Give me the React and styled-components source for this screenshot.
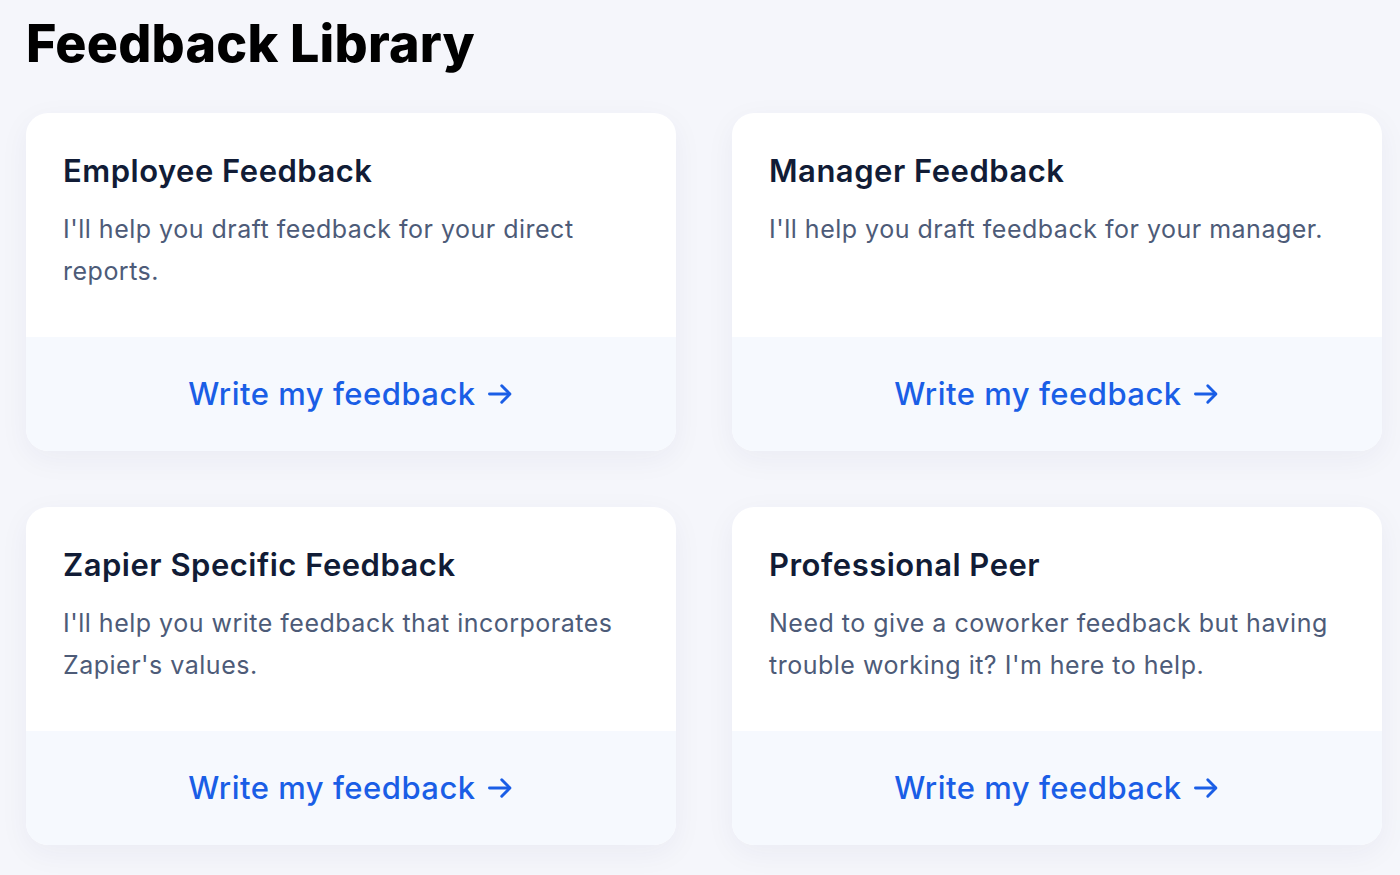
import React from "react";
import styled, { createGlobalStyle } from "styled-components";

const Global = createGlobalStyle`
  html, body { margin: 0; padding: 0; background: #f5f6fb; }
  body { font-family: Inter, "Noto Sans", sans-serif; -webkit-font-smoothing: antialiased; }
`;

const Page = styled.main`
  padding: 13px 18px 30px 26px;
`;

const Title = styled.h1`
  margin: 0 0 38px 0;
  font-size: 52px;
  line-height: 62px;
  font-weight: 800;
  color: #000;
  letter-spacing: 0.2px;
`;

const Grid = styled.div`
  display: grid;
  grid-template-columns: 650px 650px;
  column-gap: 56px;
  row-gap: 56px;
`;

const Card = styled.article`
  display: flex;
  flex-direction: column;
  height: 338px;
  border-radius: 22px;
  background: #fff;
  overflow: hidden;
  box-shadow: 0 8px 30px rgba(30, 40, 90, 0.05);
`;

const Body = styled.div`
  flex: 0 0 224px;
  box-sizing: border-box;
  padding: 37px 37px 0 37px;
`;

const CardTitle = styled.h2`
  margin: 0 0 16px 0;
  font-size: 31px;
  line-height: 42px;
  font-weight: 600;
  color: #111c36;
  letter-spacing: 0.5px;
`;

const Desc = styled.p`
  margin: 0;
  font-size: 25px;
  line-height: 42px;
  font-weight: 400;
  color: #4d5b78;
  letter-spacing: 0.5px;
  max-width: 570px;
`;

const Footer = styled.div`
  flex: 1;
  display: flex;
  align-items: center;
  justify-content: center;
  background: #f6f9fe;
`;

const Link = styled.a`
  display: inline-flex;
  align-items: center;
  gap: 10px;
  font-size: 31px;
  line-height: 40px;
  font-weight: 500;
  color: #1a5ee6;
  letter-spacing: 0.5px;
  text-decoration: none;
  cursor: pointer;
`;

const Arrow = () => (
  <svg width="28" height="28" viewBox="0 0 24 24" fill="none" stroke="currentColor" strokeWidth="2.5" strokeLinecap="round" strokeLinejoin="round">
    <path d="M3 12h17" />
    <path d="M13.5 5l7 7-7 7" />
  </svg>
);

const cards = [
  { title: "Employee Feedback", desc: "I'll help you draft feedback for your direct reports." },
  { title: "Manager Feedback", desc: "I'll help you draft feedback for your manager." },
  { title: "Zapier Specific Feedback", desc: "I'll help you write feedback that incorporates Zapier's values." },
  { title: "Professional Peer", desc: "Need to give a coworker feedback but having trouble working it? I'm here to help." },
];

export default function App() {
  return (
    <>
      <Global />
      <Page>
        <Title>Feedback Library</Title>
        <Grid>
          {cards.map((c) => (
            <Card key={c.title}>
              <Body>
                <CardTitle>{c.title}</CardTitle>
                <Desc>{c.desc}</Desc>
              </Body>
              <Footer>
                <Link>
                  Write my feedback <Arrow />
                </Link>
              </Footer>
            </Card>
          ))}
        </Grid>
      </Page>
    </>
  );
}
